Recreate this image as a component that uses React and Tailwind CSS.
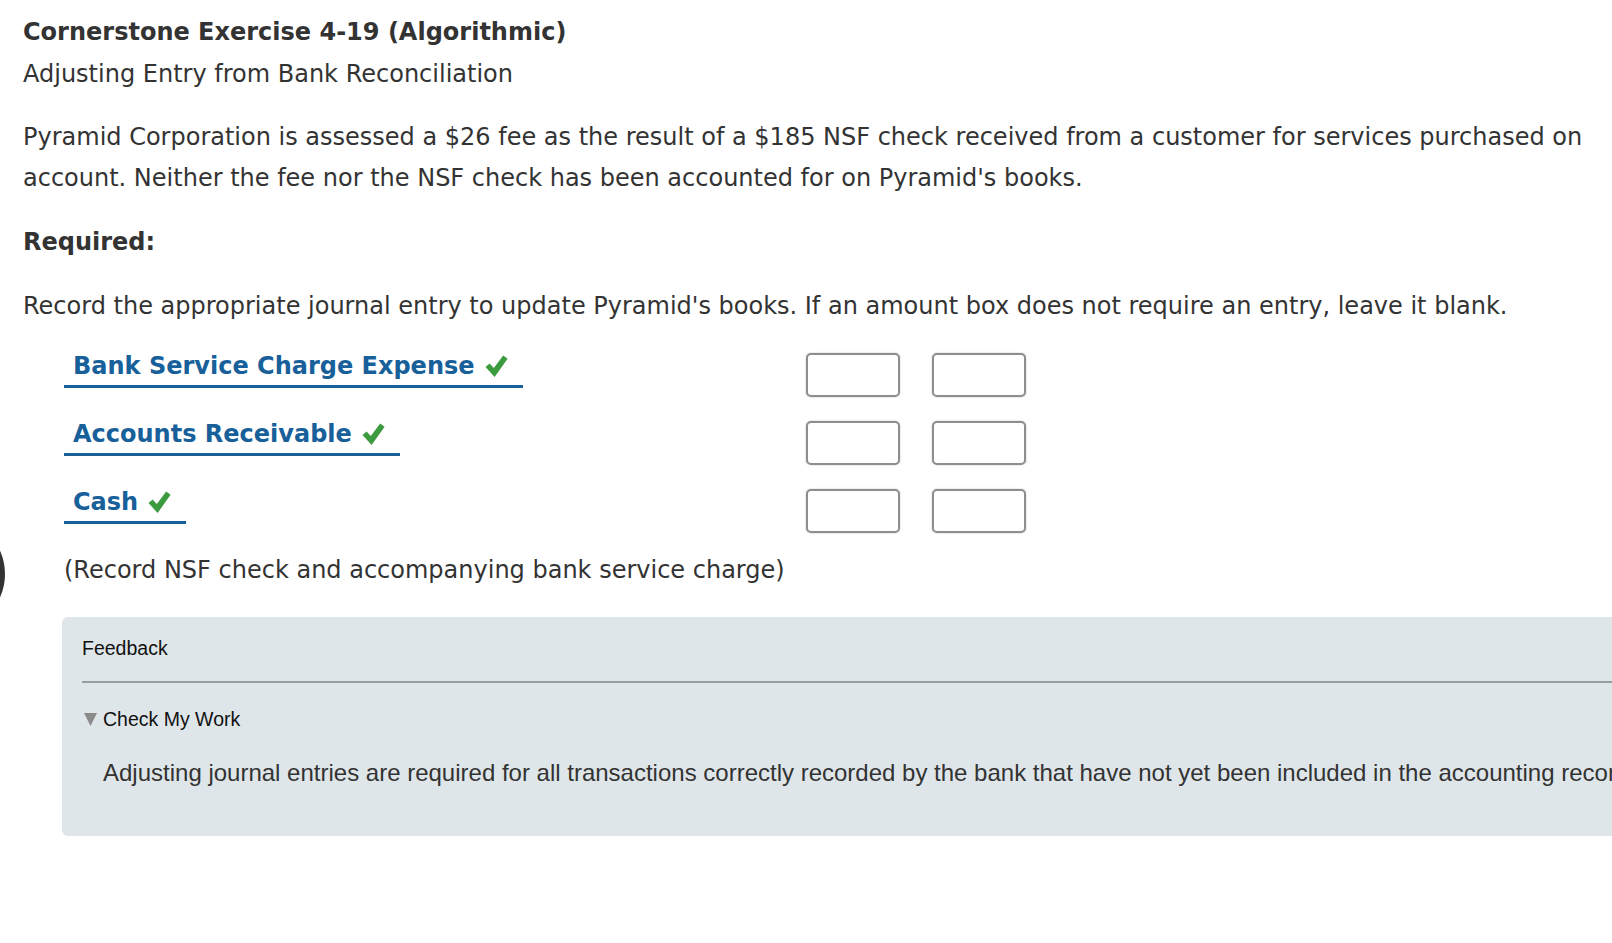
import React from "react"

const accounts = [
  { name: "Bank Service Charge Expense" },
  { name: "Accounts Receivable" },
  { name: "Cash" },
]

function Check() {
  return (
    <svg width="23" height="23" viewBox="0 0 23 23" className="ml-[10px] shrink-0">
      <path d="M0.5 12 L4.6 8.4 L8.8 13 L18.2 0.6 L22.6 3.8 L9.6 22 Z" fill="#3d9b3f" />
    </svg>
  )
}

function AccountRow({ name }) {
  return (
    <div className="flex h-[68px] items-start">
      <div className="w-[742px] shrink-0">
        <div className="mt-[10px] inline-flex items-center border-b-[3px] border-[#17609a] pb-[4px] pl-[9px] pr-[15px]">
          <span className="text-[24px] font-bold leading-[30px] text-[#17609a]">{name}</span>
          <Check />
        </div>
      </div>
      <div className="mt-[12px] flex gap-[32px]">
        <input className="h-[44px] w-[94px] rounded-[5px] border-2 border-[#8e8e8e] bg-white shadow-[0_0_2px_rgba(0,0,0,0.25)]" />
        <input className="h-[44px] w-[94px] rounded-[5px] border-2 border-[#8e8e8e] bg-white shadow-[0_0_2px_rgba(0,0,0,0.25)]" />
      </div>
    </div>
  )
}

export default function App() {
  return (
    <div className="relative min-h-screen w-full overflow-hidden bg-white pl-[23px] pt-[11px] font-['DejaVu_Sans',Verdana,sans-serif] text-[#333]">
      {/* header */}
      <h1 className="text-[24px] font-bold leading-[42px]">Cornerstone Exercise 4-19 (Algorithmic)</h1>
      <h2 className="text-[24px] leading-[42px]">Adjusting Entry from Bank Reconciliation</h2>

      <p className="mt-[22px] whitespace-nowrap text-[24px] leading-[41px]">
        Pyramid Corporation is assessed a $26 fee as the result of a $185 NSF check received from a customer for services purchased on
        <br />
        account. Neither the fee nor the NSF check has been accounted for on Pyramid's books.
      </p>

      <p className="mt-[23px] text-[24px] font-bold leading-[41px]">Required:</p>

      <p className="mt-[23px] whitespace-nowrap text-[24px] leading-[41px]">
        Record the appropriate journal entry to update Pyramid's books. If an amount box does not require an entry, leave it blank.
      </p>

      {/* journal entry */}
      <div className="ml-[41px] mt-[14px]">
        {accounts.map((a) => (
          <AccountRow key={a.name} name={a.name} />
        ))}
        <p className="mt-[5px] text-[24px] leading-[41px]">(Record NSF check and accompanying bank service charge)</p>
      </div>

      <div className="absolute left-[-109px] top-[517px] h-[114px] w-[114px] rounded-full bg-[#333]" />

      {/* feedback */}
      <div className="-mr-[40px] ml-[39px] mt-[26px] h-[219px] rounded-[6px] bg-[#dfe6e9] pl-[20px] pt-[19px] font-['Liberation_Sans',Arial,sans-serif]">
        <div className="text-[19.5px] leading-[24px] text-[#111]">Feedback</div>
        <div className="mt-[21px] h-[2px] bg-[#959ea1]" />
        <div className="mt-[24px] flex items-center text-[19.5px] leading-[24px] text-[#111]">
          <svg width="13" height="13" viewBox="0 0 13 13" className="ml-[2px] mr-[6px]">
            <polygon points="0,0 13,0 6.5,13" fill="#8a8a8a" />
          </svg>
          Check My Work
        </div>
        <div className="mt-[28px] whitespace-nowrap pl-[21px] text-[24px] leading-[28px] text-[#333]">
          Adjusting journal entries are required for all transactions correctly recorded by the bank that have not yet been included in the accounting records of the company.
        </div>
      </div>
    </div>
  )
}
